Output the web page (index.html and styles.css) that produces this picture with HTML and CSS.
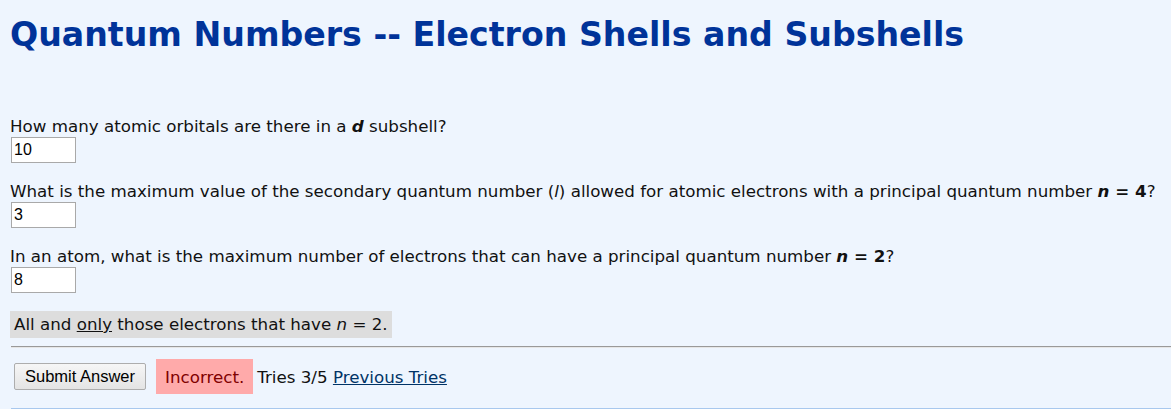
FILE: index.html
```html
<!DOCTYPE html>
<html lang="en">
<head>
  <meta charset="UTF-8" />
  <title>Quantum Numbers -- Electron Shells and Subshells</title>
  <link rel="stylesheet" href="styles.css">
</head>
<body>

  <div class="page">
    <h1>Quantum Numbers -- Electron Shells and Subshells</h1>

    <!-- questions -->
    <div class="problem">
      <p class="question">How many atomic orbitals are there in a <b><i>d</i></b> subshell?</p>
      <input class="answer" type="text" value="10">
    </div>

    <div class="problem">
      <p class="question">What is the maximum value of the secondary quantum number (<i>l</i>) allowed for atomic electrons with a principal quantum number <b><i>n</i> = 4</b>?</p>
      <input class="answer" type="text" value="3">
    </div>

    <div class="problem">
      <p class="question">In an atom, what is the maximum number of electrons that can have a principal quantum number <b><i>n</i> = 2</b>?</p>
      <input class="answer" type="text" value="8">
    </div>

    <div class="hint">All and <u>only</u> those electrons that have <i>n</i> = 2.</div>

    <hr class="rule">

    <div class="submit-row">
      <button class="btn-submit">Submit Answer</button>
      <span class="result">Incorrect.</span>
      <span class="tries">Tries 3/5 <a href="#">Previous Tries</a></span>
    </div>

    <div class="footer-line"></div>
  </div>

</body>
</html>
```

FILE: styles.css
```css
body {
  margin: 0;
  background-color: #eef5fe;
  font-family: "DejaVu Sans", Verdana, sans-serif;
  font-size: 16.7px;
  color: #111;
}

.page {
  padding: 0 0 0 10px;
}

h1 {
  box-sizing: border-box;
  margin: 0;
  padding-top: 15px;
  height: 116px;
  font-size: 33.2px;
  color: #003399;
}

.problem {
  margin-bottom: 18px;
}

.question {
  margin: 0;
  line-height: 20px;
}

.answer {
  display: block;
  box-sizing: border-box;
  width: 65px;
  height: 26px;
  margin: 1px 0 0 1px;
  padding: 1px 2px;
  border: 1px solid #a9a9a9;
  background: white;
  font-family: "Liberation Sans", Arial, sans-serif;
  font-size: 16px;
  color: #000;
}

.hint {
  display: inline-block;
  padding: 3px 4px 4px 4px;
  line-height: 20px;
  background-color: #dddddd;
}

.rule {
  margin: 8px 0 0 1px;
  border: none;
  border-top: 1px solid #999;
  border-bottom: 1px solid #e6e6e6;
}

.submit-row {
  display: flex;
  align-items: center;
  margin-top: 11px;
  height: 35px;
}

.btn-submit {
  box-sizing: border-box;
  width: 132px;
  height: 27px;
  margin-left: 4px;
  padding: 0;
  background: linear-gradient(#f6f6f6, #e4e4e4);
  border: 1px solid #adadad;
  border-radius: 2px;
  font-family: "Liberation Sans", Arial, sans-serif;
  font-size: 16.5px;
  color: #000;
}

.result {
  display: flex;
  align-items: center;
  height: 35px;
  margin-left: 10px;
  padding: 0 9px 0 9px;
  background-color: #ffaaaa;
  color: #800000;
}

.tries {
  margin-left: 4px;
}

.tries a {
  color: #003366;
}

.footer-line {
  margin: 14px 0 0 1px;
  border-top: 2px solid #a8c8ee;
}
```
